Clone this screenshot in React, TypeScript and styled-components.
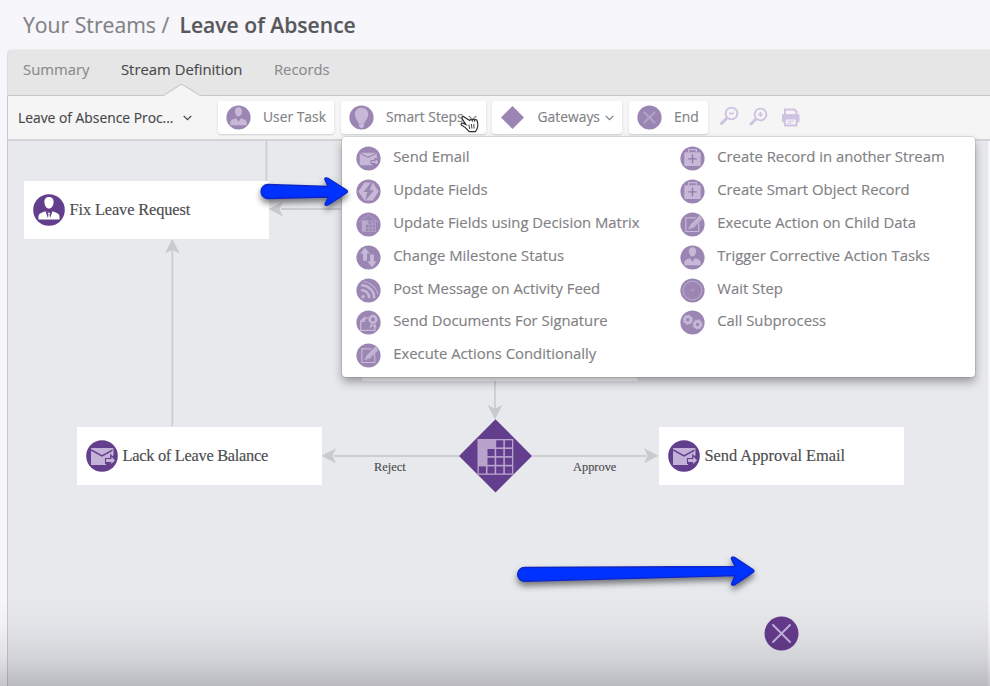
import React from 'react';
import styled, { createGlobalStyle } from 'styled-components';

const GlobalStyle = createGlobalStyle`
  * { box-sizing: border-box; }
  html, body { margin: 0; padding: 0; }
  body {
    width: 990px;
    height: 686px;
    overflow: hidden;
    background: #f7f6fb;
    font-family: 'Open Sans', 'Noto Sans', sans-serif;
    color: #818184;
    -webkit-text-stroke: 0.15px currentColor;
  }
`;

const Page = styled.div`
  display: flex;
  flex-direction: column;
  width: 990px;
  height: 686px;
  padding-left: 7px;
  position: relative;
  overflow: hidden;
`;

const Header = styled.header`
  flex: 0 0 50px;
  display: flex;
  align-items: flex-start;
  padding: 10px 0 0 16px;
  font-size: 21.2px;
  line-height: 30px;
  white-space: pre;
`;

const Crumb = styled.span`
  width: 156.500px;
`;

const Title = styled.h1`
  margin: 0;
  font-size: 21.1px;
  font-weight: 600;
  color: #58585a;
`;

const Tabs = styled.nav`
  flex: 0 0 46px;
  display: flex;
  gap: 31.5px;
  padding: 8px 0 0 15px;
  border-left: 1px solid #dcdcde;
  border-bottom: 1px solid #c6c6c8;
  border-top-left-radius: 5px;
  background: #e6e6e6;
  box-shadow: 0 -1px 1px #ebebee;
`;

const Tab = styled.a<{ $active?: boolean }>`
  position: relative;
  height: 37px;
  font-size: 14.85px;
  line-height: 22px;
  white-space: nowrap;
  color: ${(p) => (p.$active ? '#4a4a4c' : '#8b8b8d')};
`;

const TabPointer = styled.svg`
  position: absolute;
  left: 41px;
  top: 24px;
  width: 40px;
  height: 15px;
`;

const Toolbar = styled.div`
  flex: 0 0 45px;
  display: flex;
  align-items: flex-start;
  padding: 5px 0 0 10px;
  border-left: 1px solid #c9c9cc;
  border-bottom: 2px solid #d3d3d6;
  background: #f5f5f5;
`;

const ProcessPicker = styled.div`
  display: flex;
  align-items: center;
  gap: 9px;
  width: 200px;
  height: 33px;
  font-size: 13.85px;
  color: #464648;
  white-space: nowrap;
`;

const ToolButton = styled.button<{ $w: number; $gap: number; $label: number }>`
  display: flex;
  align-items: center;
  width: ${(p) => p.$w}px;
  height: 33px;
  margin: 0 ${(p) => p.$gap}px 0 0;
  padding: 0 0 0 8px;
  border: 0;
  border-radius: 3px;
  background: #fff;
  box-shadow: 0 1px 2px rgba(0, 0, 0, 0.16);
  font: 13.85px/20px 'Open Sans', sans-serif;
  color: #818184;
  white-space: nowrap;
  span { width: ${(p) => p.$label}px; text-align: left; margin-top: -2px; }
`;

const ToolIcon = styled.svg<{ $after: number }>`
  flex: none;
  width: 25px;
  height: 25px;
  margin-left: -0.500px;
  margin-right: ${(p) => p.$after + 0.5}px;
`;

const Chevron = styled.svg`
  width: 9px;
  height: 6px;
  fill: none;
  stroke: currentColor;
  stroke-width: 1.3;
`;

const Utilities = styled.div`
  display: flex;
  padding: 4px 0 0 11.5px;
  svg { display: block; width: 86px; height: 24px; }
`;

const Canvas = styled.main`
  position: relative;
  flex: 1;
  margin-right: 2px;
  border-left: 1px solid #c9c9cc;
  background: #e8e9ed;
`;

const Edges = styled.svg`
  position: absolute;
  left: 0;
  top: 0;
  width: 980px;
  height: 545px;
`;

const Node = styled.div<{ $x: number; $y: number }>`
  position: absolute;
  left: ${(p) => p.$x}px;
  top: ${(p) => p.$y}px;
  display: flex;
  align-items: center;
  gap: 5px;
  width: 244.5px;
  height: 58.5px;
  padding-left: 8.5px;
  background: #fff;
  svg { width: 32px; height: 32px; flex: none; }
`;

const NodeLabel = styled.span<{ $spacing: number }>`
  font: 16.4px/22px 'Liberation Serif', serif;
  letter-spacing: ${(p) => p.$spacing}px;
  color: #4c4c4e;
  white-space: nowrap;
`;

const EdgeLabel = styled.span<{ $x: number; $y: number }>`
  position: absolute;
  left: ${(p) => p.$x}px;
  top: ${(p) => p.$y}px;
  font: 12.4px/14px 'Liberation Serif', serif;
  color: #4c4c4e;
`;

const HiddenNode = styled.div`
  position: absolute;
  left: 354px;
  top: 225px;
  width: 275px;
  height: 15px;
  background: #fff;
`;

const Menu = styled.div`
  position: absolute;
  z-index: 2;
  left: 341.5px;
  top: 137px;
  display: grid;
  grid-template-columns: 324px 1fr;
  grid-template-rows: repeat(7, 32.8px);
  grid-auto-flow: column;
  width: 633.5px;
  height: 240px;
  padding: 4px 0 0 14.5px;
  border-radius: 4px;
  background: #fff;
  box-shadow: 0 0 0 1px rgba(0, 0, 0, 0.09), 0 5px 10px rgba(0, 0, 0, 0.34);
`;

const MenuItem = styled.div`
  display: flex;
  align-items: flex-start;
  gap: 12.2px;
  font-size: 14.85px;
  line-height: 22px;
  padding-top: 4.4px;
  white-space: nowrap;
  svg { width: 25px; height: 25px; flex: none; margin-top: 1px; }
`;

const BottomShade = styled.div`
  position: absolute;
  z-index: 3;
  left: 0;
  bottom: 0;
  width: 990px;
  height: 90px;
  background: linear-gradient(rgba(20, 20, 30, 0), rgba(20, 20, 30, 0.03) 35%, rgba(20, 20, 30, 0.1) 70%, rgba(20, 20, 30, 0.22));
  pointer-events: none;
`;

const Annotations = styled.svg`
  position: absolute;
  z-index: 4;
  left: 0;
  top: 0;
  width: 990px;
  height: 686px;
  pointer-events: none;
`;

type Glyph =
  | 'user' | 'bulb' | 'end' | 'mail' | 'bolt' | 'matrix' | 'swap'
  | 'feed' | 'sign' | 'edit' | 'case' | 'clock' | 'gears';

const LIGHT = '#c6b8d6';

/* Glyphs are drawn on a 32 unit disc. */
const glyphs: Record<Glyph, React.ReactNode> = {
  user: (
    <g fill={LIGHT}>
      <path d="M16 3c3.200 0 4.800 2.300 4.600 5.400-.2 3.400-2 6.400-4.600 6.400s-4.400-3-4.600-6.400C11.200 5.300 12.800 3 16 3z" />
      <path d="M5.500 26v-3.500c0-3.400 4-4.300 7.300-5.500l3.200 4.500 3.200-4.500c3.300 1.200 7.300 2.100 7.300 5.500V26z" />
    </g>
  ),
  bulb: (
    <path fill={LIGHT} d="M16 3.500c-4.900 0-8.600 3.700-8.600 8.400 0 5 4.200 8.600 5 12.300h7.200c.8-3.700 5-7.300 5-12.300 0-4.700-3.700-8.400-8.600-8.400zM12.800 24h6.400v3.200l-1.900 2.300h-2.600l-1.900-2.300z" />
  ),
  end: <path d="M9.500 9.500l13 13m0-13l-13 13" stroke="#bba8cd" strokeWidth="2.600" strokeLinecap="round" opacity=".8" />,
  mail: (
    <g>
      <path fill={LIGHT} d="M4.800 8.500h21.800v8.200h-3v3h-4v4.300h-14.800z" />
      <path d="M4.800 9l10.700 5.500L26.600 9" fill="none" stroke="#9b86b3" strokeWidth="1.300" />
      <path fill={LIGHT} stroke="#8a70a8" strokeWidth="1.100" d="M19 18.800h5.500v-3.300l5.200 5-5.200 5v-3H19z" />
      <path d="M5 23.900h16" stroke={LIGHT} strokeWidth="1.500" />
    </g>
  ),
  bolt: (
    <path fill={LIGHT} fillRule="evenodd" d="M11 4.500h10.500L29 16l-7.500 11.500H11L3 16zM19.500 4L9.500 16.500h5L11.500 28l11.500-13.500h-5.500L21.500 4z" />
  ),
  matrix: (
    <g stroke={LIGHT} opacity=".75">
      <path fill={LIGHT} d="M8 11.500h7v4h-3v8.500H8z" />
      <path fill="none" strokeWidth=".9" d="M8 25h17V11.500H8m4 4h13m-13 5h13M12 15v10m4.500-10v10m4.500-14v14M3.500 13L16 3.500 28.500 13" />
    </g>
  ),
  swap: <path fill={LIGHT} d="M11.500 3.500l6 7.500h-3.500v9h-5v-9H5.500zM20.500 28.500l-6-7.500H18v-9h5v9h3.500z" />,
  feed: (
    <g fill="none" stroke={LIGHT} strokeWidth="3.200">
      <circle cx="9" cy="24" r="2.300" fill={LIGHT} stroke="none" />
      <path d="M6.500 15.500c6 0 10.500 4.500 10.500 10.500M6.500 9.200c9.500 0 16.800 7.300 16.800 16.800" />
      <path d="M9 4.600C18 5 26 12 28 21" strokeWidth="1.600" opacity=".7" />
    </g>
  ),
  sign: (
    <g fill="none" stroke={LIGHT} strokeWidth="1.700">
      <path d="M16 10.500h-6L6 14.500V26h18v-6M11 10l-4 4.500h4z" />
      <circle cx="21.700" cy="12" r="4.200" strokeWidth="3.200" />
      <path d="M19.500 17.500l-1 4 3.200-2 3.200 2-1-4" />
    </g>
  ),
  edit: (
    <g fill="none" stroke={LIGHT} strokeWidth="1.500">
      <path d="M20 7.500H7.500v17.500h16.500V14" />
      <path d="M13 20.500l1-4L25 5.500l3 3-11 11z" fill={LIGHT} opacity=".85" />
      <path d="M11 21.500L26 6" />
    </g>
  ),
  case: (
    <g>
      <path d="M11 8V4.500h10V8" fill="none" stroke={LIGHT} strokeWidth="1.600" />
      <rect x="5.500" y="8" width="21" height="17.500" rx="1.500" fill={LIGHT} />
      <path d="M16 11v11M10.500 16.500h11" stroke="#937cad" strokeWidth="1.800" />
    </g>
  ),
  clock: (
    <g fill="none" stroke={LIGHT} strokeWidth="1.200" opacity=".8">
      <circle cx="16" cy="16" r="12" />
      <circle cx="16" cy="16" r="10" strokeWidth=".6" strokeDasharray="1 4.200" />
      <path d="M14 14.500l2 1.800 2-2.300" />
    </g>
  ),
  gears: (
    <g fill="none" stroke={LIGHT}>
      <circle cx="10" cy="12.500" r="4" strokeWidth="3.400" />
      <circle cx="10" cy="12.500" r="6" strokeWidth="1.200" strokeDasharray="2.400 2.300" />
      <circle cx="22.500" cy="18.500" r="4" strokeWidth="3.400" />
      <circle cx="22.500" cy="18.500" r="6" strokeWidth="1.200" strokeDasharray="2.400 2.300" />
    </g>
  ),
};

const Disc = ({ glyph }: { glyph: Glyph }) => (
  <>
    <circle cx="16" cy="16" r="15.500" fill="#9b86b3" />
    {glyphs[glyph]}
  </>
);

const leftItems: [Glyph, string][] = [
  ['mail', 'Send Email'],
  ['bolt', 'Update Fields'],
  ['matrix', 'Update Fields using Decision Matrix'],
  ['swap', 'Change Milestone Status'],
  ['feed', 'Post Message on Activity Feed'],
  ['sign', 'Send Documents For Signature'],
  ['edit', 'Execute Actions Conditionally'],
];

const rightItems: [Glyph, string][] = [
  ['case', 'Create Record in another Stream'],
  ['case', 'Create Smart Object Record'],
  ['edit', 'Execute Action on Child Data'],
  ['user', 'Trigger Corrective Action Tasks'],
  ['clock', 'Wait Step'],
  ['gears', 'Call Subprocess'],
];

const Down = () => (
  <Chevron viewBox="0 0 9 6">
    <path d="M.7.900l3.800 3.800L8.300.900" />
  </Chevron>
);

const MailNodeIcon = () => (
  <svg viewBox="0 0 32 32">
    <circle cx="16" cy="16" r="15.800" fill="#633e8d" />
    <path fill="#c3b1d7" d="M5 8.500h22v8h-3v3h-5v5H5z" />
    <path d="M5 9.800l11 6.200 11-6.200" fill="none" stroke="#633e8d" strokeWidth="1.500" />
    <path d="M27 15.500v-7H5M5 24.500h15" fill="none" stroke="#c3b1d7" />
    <path fill="#c3b1d7" stroke="#633e8d" strokeWidth="1.100" d="M19.500 18.500h5.300V15l5 5.500-5 5v-3h-5.300z" />
  </svg>
);

const MatrixCells = () => {
  const cells: React.ReactNode[] = [];
  for (let r = 0; r < 4; r++) {
    for (let c = 0; c < 4; c++) {
      if ((r === 0 && c < 2) || (c === 0 && r < 3)) continue;
      cells.push(<rect key={`${r}-${c}`} x={470.8 + c * 8.7} y={299.3 + r * 8.7} width="7.1" height="7.1" fill="#633e8d" />);
    }
  }
  return (
    <>
      <rect x="469.500" y="298" width="35.800" height="35.800" fill="#b9a3cd" />
      {cells}
    </>
  );
};

export default function App() {
  return (
    <Page>
      <GlobalStyle />
      <Header>
        <Crumb>Your Streams /</Crumb>
        <Title>Leave of Absence</Title>
      </Header>
      <Tabs>
        <Tab>Summary</Tab>
        <Tab $active>
          Stream Definition
          <TabPointer viewBox="0 0 40 15">
            <path d="M0 14L17.500 3q2-1.200 4 0L40 14v2H0z" fill="#f5f5f5" />
            <path d="M0 13.500h1.500L17.800 3q1.700-1 3.400 0L38 13.500h2" fill="none" stroke="#c8c8ca" strokeWidth="1.200" />
          </TabPointer>
        </Tab>
        <Tab>Records</Tab>
      </Tabs>
      <Toolbar>
        <ProcessPicker>
          <span>Leave of Absence Proc...</span>
          <Down />
        </ProcessPicker>
        <ToolButton $w={116} $gap={7} $label={64}>
          <ToolIcon $after={12} viewBox="0 0 32 32"><Disc glyph="user" /></ToolIcon>
          <span>User Task</span>
        </ToolButton>
        <ToolButton $w={144.5} $gap={6.5} $label={82}>
          <ToolIcon $after={12} viewBox="0 0 32 32"><Disc glyph="bulb" /></ToolIcon>
          <span>Smart Steps</span>
          <Down />
        </ToolButton>
        <ToolButton $w={130} $gap={7} $label={67.5}>
          <ToolIcon $after={12.5} viewBox="0 0 25 25"><path d="M12.500 1L24 12.500 12.500 24 1 12.500z" fill="#9b86b3" /></ToolIcon>
          <span>Gateways</span>
          <Down />
        </ToolButton>
        <ToolButton $w={79} $gap={0} $label={26}>
          <ToolIcon $after={12} viewBox="0 0 32 32"><Disc glyph="end" /></ToolIcon>
          <span>End</span>
        </ToolButton>
        <Utilities>
          <svg viewBox="0 0 86 24" fill="none" stroke="#cfc2e2">
            <circle cx="11.500" cy="8.500" r="5.900" strokeWidth="1.900" />
            <path d="M9 8.500h5" strokeWidth="1.700" />
            <path d="M6.500 13.500L1.500 18.500" strokeWidth="3" strokeLinecap="round" />
            <circle cx="40.500" cy="9.500" r="5.900" strokeWidth="1.900" />
            <path d="M38 9.500h5m-2.500-2.500v5" strokeWidth="1.700" />
            <path d="M35.500 14.500L31 19" strokeWidth="3" strokeLinecap="round" />
            <path d="M65 9V4.500h9l2.500 2V9" strokeWidth="2" />
            <rect x="62" y="9" width="17.500" height="8.500" rx="1.500" fill="#cfc2e2" stroke="none" />
            <path d="M65 13.500h11.500v7H65z" fill="#f5f5f5" strokeWidth="1.800" />
            <path d="M67.500 16.200h6.500m-6.500 2h4" strokeWidth="1" />
          </svg>
        </Utilities>
      </Toolbar>
      <Canvas>
        <Edges viewBox="0 0 980 545">
          <g stroke="#cdced2" strokeWidth="1.800" fill="none">
            <path d="M258.500 0v40M333 68h-60M164.300 285V108M487 240v28M451 315H326M524 315h114" />
          </g>
          <g fill="#c9cace">
            <path d="M260.500 68l14.500-7.500-3.500 7.500 3.500 7.500z" />
            <path d="M164.300 98l7.500 14.500-7.500-3.500-7.500 3.500z" />
            <path d="M487 278.500l-7.500-14.500 7.500 3.500 7.500-3.500z" />
            <path d="M313.500 314.700l14.500-7.500-3.500 7.500 3.500 7.500z" />
            <path d="M650.500 314.700l-14.500-7.500 3.500 7.500-3.500 7.500z" />
          </g>
          <path d="M487.500 278.200L524 315l-36.500 36.500L451 315z" fill="#633e8d" />
          <MatrixCells />
          <circle cx="773.500" cy="492.500" r="17" fill="#653b8c" />
          <path d="M765 484l17 17m0-17l-17 17" stroke="#c8b5db" strokeWidth="1.900" strokeLinecap="round" />
        </Edges>
        <HiddenNode />
        <Node $x={16} $y={39.5}>
          <svg viewBox="0 0 32 32">
            <circle cx="16" cy="16" r="15.800" fill="#633e8d" />
            <path fill="#fff" d="M16 3c3.200 0 4.800 2.200 4.600 5.300-.2 3.300-2 6.300-4.600 6.300s-4.400-3-4.600-6.300C11.200 5.200 12.800 3 16 3zM5.500 25.500v-3c0-3 3.500-4 7-5.200l2.500 7 .5-4.300-1-1.300h3l-1 1.300.5 4.300 2.500-7c3.500 1.200 7 2.200 7 5.200v3z" />
          </svg>
          <NodeLabel $spacing={-0.13}>Fix Leave Request</NodeLabel>
        </Node>
        <Node $x={69} $y={285.7}>
          <MailNodeIcon />
          <NodeLabel $spacing={-0.29}>Lack of Leave Balance</NodeLabel>
        </Node>
        <Node $x={651} $y={285.7}>
          <MailNodeIcon />
          <NodeLabel $spacing={-0.03}>Send Approval Email</NodeLabel>
        </Node>
        <EdgeLabel $x={366} $y={319.4}>Reject</EdgeLabel>
        <EdgeLabel $x={565} $y={319.4}>Approve</EdgeLabel>
      </Canvas>
      <Menu>
        {[...leftItems, ...rightItems].map(([glyph, label]) => (
          <MenuItem key={label}>
            <svg viewBox="0 0 32 32"><Disc glyph={glyph} /></svg>
            {label}
          </MenuItem>
        ))}
      </Menu>
      <BottomShade />
      <Annotations viewBox="0 0 990 686">
        <defs>
          <filter id="drop" x="-10%" y="-30%" width="120%" height="190%">
            <feDropShadow dx="0" dy="4" stdDeviation="3" floodOpacity=".5" />
          </filter>
        </defs>
        <g fill="#0433ff" stroke="#0a25c4" strokeWidth="1.300" strokeLinejoin="round" filter="url(#drop)">
          <path d="M267.500 184.500L328 186.500l-3.300-7.500q.5-2 3.300-.7L346.500 190q2 1.500 0 3l-18.500 12q-3 1-3-1l3.500-7L268.500 198.500a7 7 0 0 1-1-14z" />
          <path d="M524.500 567.500L735 566.500l-3.800-8q.5-2.300 3.300-1.200L753 569.500q2 1.500 0 3L734.500 585q-3.300.8-3-1.300l3.500-8L524.500 581.300a6.900 6.900 0 0 1 0-13.800z" />
        </g>
        <g transform="translate(-3.800 0)">
          <path
            d="M468 117c-1.600-1.400-2.800.2-2 1.700l3.700 5.800-2.800-1.400c-2.100-.4-2.700 1.400-1.400 2.200l3.700 2.300 3.800 4.100h6.200c2.400-3 3.400-6.500 1.600-11.200-.8-1.600-2.100-1-2.300 0-.6-1.500-2.300-1.300-2.500 0-.7-1.400-2.200-1.200-2.500 0z"
            fill="#fff" stroke="#2c2c2e" strokeWidth="1.200"
          />
          <path d="M472.700 124.500l.8 4.500m1.700-5l.5 4.500m2-4.500l.1 4.500" stroke="#2c2c2e" strokeWidth=".9" />
        </g>
      </Annotations>
    </Page>
  );
}
